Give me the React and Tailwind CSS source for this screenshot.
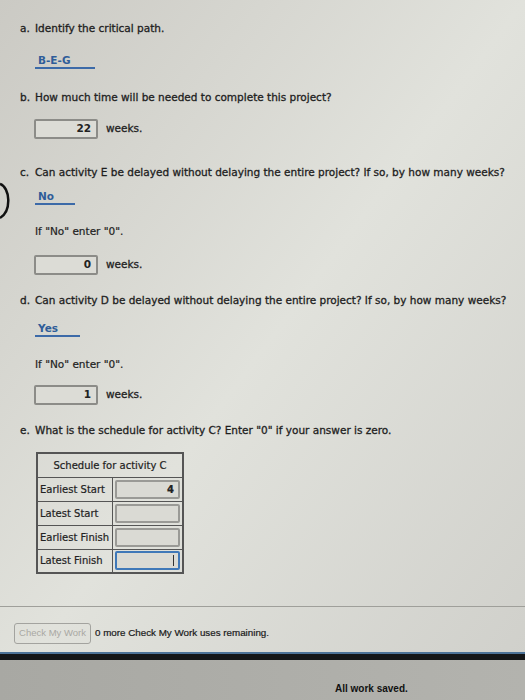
import React from "react";

const font = { fontFamily: '"DejaVu Sans", Verdana, sans-serif' };
const arial = { fontFamily: '"Liberation Sans", Arial, sans-serif' };

const AnswerLine = ({ text, width, mt }) => (
  <div className={`ml-[35px] ${mt} ${width} border-b-2 border-[#3c6aa8] pl-[3px] text-[10.5px] font-bold leading-[13px] text-[#2f5d99]`}>
    {text}
  </div>
);

const WeeksInput = ({ value, mt }) => (
  <div className={`ml-[34px] ${mt} flex items-center gap-[8px]`}>
    <div className="flex h-[20px] w-[64px] items-center justify-end rounded-[2px] border-2 border-[#8c8c88] bg-[#dcdcd6] pr-[5px] text-[10.5px] font-bold text-[#222]">
      {value}
    </div>
    <span className="text-[10.5px] text-[#222] [-webkit-text-stroke:0.3px]">weeks.</span>
  </div>
);

const Question = ({ label, children, mt }) => (
  <div className={`ml-[20px] ${mt} flex text-[10.5px] leading-[13px] text-[#1e1e1e] [-webkit-text-stroke:0.3px]`}>
    <span className="w-[15px]">{label}</span>
    <span>{children}</span>
  </div>
);

const Note = ({ mt }) => (
  <div className={`ml-[35px] ${mt} text-[10.5px] leading-[13px] text-[#222] [-webkit-text-stroke:0.2px]`}>
    If "No" enter "0".
  </div>
);

const rows = [
  { label: "Earliest Start", value: "4" },
  { label: "Latest Start", value: "" },
  { label: "Earliest Finish", value: "" },
  { label: "Latest Finish", value: "", active: true },
];

export default function App() {
  return (
    <div
      style={font}
      className="relative h-[700px] w-[525px] overflow-hidden bg-gradient-to-br from-[#cbcac4] via-[#e1e2dc] to-[#cfcfca]"
    >
      <svg className="absolute left-0 top-[181px]" width="14" height="40" viewBox="0 0 14 40">
        <path d="M0 3 C10 6 12 30 0 37" fill="none" stroke="#111" strokeWidth="2.5" />
      </svg>

      <div className="flex flex-col pt-[22px]">
        <Question label="a.">Identify the critical path.</Question>
        <AnswerLine text="B-E-G" width="w-[60px]" mt="mt-[19px]" />

        <Question label="b." mt="mt-[22px]">How much time will be needed to complete this project?</Question>
        <WeeksInput value="22" mt="mt-[15px]" />

        <Question label="c." mt="mt-[27px]">
          Can activity E be delayed without delaying the entire project? If so, by how many weeks?
        </Question>
        <AnswerLine text="No" width="w-[40px]" mt="mt-[11px]" />
        <Note mt="mt-[20px]" />
        <WeeksInput value="0" mt="mt-[17px]" />

        <Question label="d." mt="mt-[19px]">
          Can activity D be delayed without delaying the entire project? If so, by how many weeks?
        </Question>
        <AnswerLine text="Yes" width="w-[45px]" mt="mt-[15px]" />
        <Note mt="mt-[21px]" />
        <WeeksInput value="1" mt="mt-[14px]" />

        <Question label="e." mt="mt-[19px]">
          What is the schedule for activity C? Enter "0" if your answer is zero.
        </Question>

        <table className="ml-[36px] mt-[15px] w-[148px] border-collapse border-2 border-[#555] text-[10px] leading-[13px] text-[#222] [-webkit-text-stroke:0.2px]">
          <thead>
            <tr>
              <th colSpan={2} className="h-[24px] border border-[#555] font-normal">
                Schedule for activity C
              </th>
            </tr>
          </thead>
          <tbody>
            {rows.map((r) => (
              <tr key={r.label} className="h-[24px]">
                <td className="w-[75px] whitespace-nowrap border border-[#555] pl-[2px]">{r.label}</td>
                <td className="border border-[#555] px-[2px]">
                  <div
                    className={`flex h-[19px] items-center justify-end rounded-[2px] border-2 bg-[#dadad4] pr-[4px] font-bold ${
                      r.active ? "border-[#3f78b8]" : "border-[#9a9a96]"
                    }`}
                  >
                    {r.active ? <span className="h-[11px] w-[1px] bg-[#333]" /> : r.value}
                  </div>
                </td>
              </tr>
            ))}
          </tbody>
        </table>
      </div>

      <div className="absolute left-0 right-0 top-[606px] h-[46px] border-t border-[#9f9f9a]">
        <div style={arial} className="ml-[14px] mt-[16px] flex items-center gap-[4px]">
          <div className="flex h-[21px] w-[77px] items-center justify-center rounded-[3px] border border-[#a3a39f] text-[9.5px] text-[#a9a8a3]">
            Check My Work
          </div>
          <span className="text-[9.8px] text-[#1a1a1a] [-webkit-text-stroke:0.2px]">
            0 more Check My Work uses remaining.
          </span>
        </div>
      </div>

      <div className="absolute left-0 right-0 top-[652px] h-[2px] bg-[#4d7398]" />
      <div className="absolute left-0 right-0 top-[654px] h-[6px] bg-[#141618]" />
      <div className="absolute bottom-0 left-0 right-0 top-[660px] bg-gradient-to-r from-[#a8a8a3] to-[#b3b3ae]">
        <div style={arial} className="ml-[335px] mt-[21px] text-[10px] font-bold text-[#111]">
          All work saved.
        </div>
      </div>
    </div>
  );
}
